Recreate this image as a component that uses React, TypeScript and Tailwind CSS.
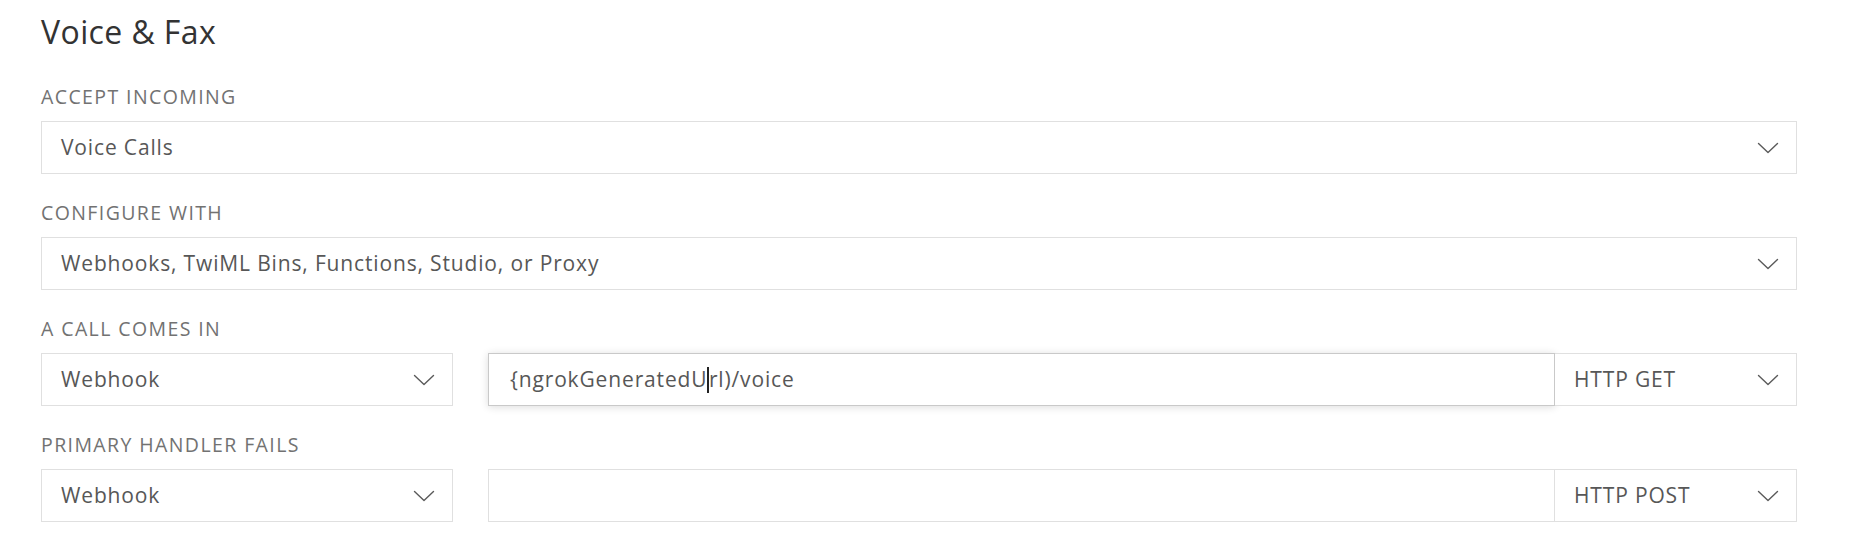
const FONT = "'Open Sans', 'Noto Sans', sans-serif";

function Chevron() {
    return (
        <svg width="22" height="12" viewBox="0 0 22 12" fill="none" className="flex-shrink-0">
            <path d="M1.5 1.5L11 10.5L20.5 1.5" stroke="#5a5a5a" strokeWidth="1.4" strokeLinecap="round" strokeLinejoin="round" />
        </svg>
    );
}

function Label({ children }: { children: React.ReactNode }) {
    return <div className="text-[19.5px] leading-[24px] tracking-[1.4px] text-[#727272] uppercase">{children}</div>;
}

function Select({ value, className = '' }: { value: string; className?: string }) {
    return (
        <div className={`h-[53px] flex items-center justify-between pl-[19px] pr-[17px] border border-[#e0e0e0] bg-white ${className}`}>
            <span className="text-[21px] tracking-[0.85px] text-[#575757]">{value}</span>
            <Chevron />
        </div>
    );
}

function Section({ label, children }: { label: string; children: React.ReactNode }) {
    return (
        <div>
            <Label>{label}</Label>
            <div className="mt-[12px]">{children}</div>
        </div>
    );
}

export default function App() {
    return (
        <div className="min-h-screen bg-white pl-[41px] pr-[66px] pt-[12px]" style={{ fontFamily: FONT }}>
            <h2 className="text-[32px] leading-[40px] tracking-[0.4px] text-[#333]">Voice &amp; Fax</h2>

            <div className="mt-[33px] flex flex-col gap-[27px]">
                <Section label="Accept Incoming">
                    <Select value="Voice Calls" />
                </Section>

                <Section label="Configure With">
                    <Select value="Webhooks, TwiML Bins, Functions, Studio, or Proxy" />
                </Section>

                <Section label="A Call Comes In">
                    <div className="flex items-stretch">
                        <Select value="Webhook" className="w-[412px] flex-shrink-0" />
                        <div className="flex-1 ml-[35px] h-[53px] flex items-center pl-[21px] border border-[#c9c9c9] shadow-[0_1px_8px_rgba(0,0,0,0.14)] bg-white">
                            <span className="text-[21px] tracking-[0.85px] text-[#575757] flex items-center">
                                {'{ngrokGeneratedU'}
                                <span className="inline-block w-[1.5px] h-[26px] bg-[#222]" />
                                {'rl)/voice'}
                            </span>
                        </div>
                        <Select value="HTTP GET" className="w-[242px] flex-shrink-0 border-l-0" />
                    </div>
                </Section>

                <Section label="Primary Handler Fails">
                    <div className="flex items-stretch">
                        <Select value="Webhook" className="w-[412px] flex-shrink-0" />
                        <div className="flex-1 ml-[35px] h-[53px] border border-[#e0e0e0] bg-white" />
                        <Select value="HTTP POST" className="w-[242px] flex-shrink-0 border-l-0" />
                    </div>
                </Section>
            </div>
        </div>
    );
}
